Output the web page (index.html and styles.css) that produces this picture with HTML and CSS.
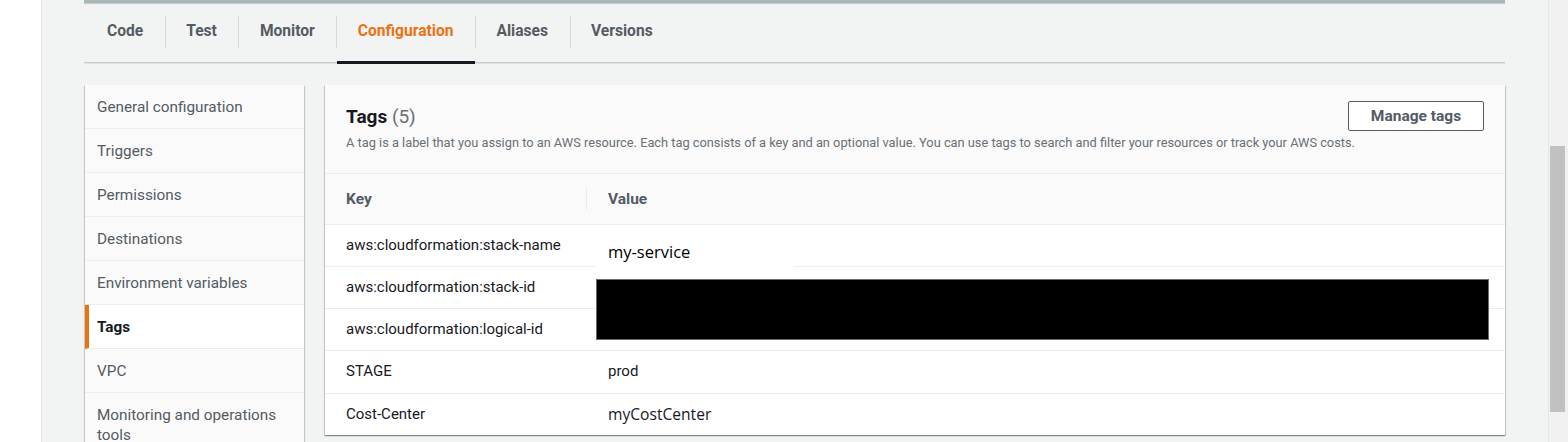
FILE: index.html
```html
<!DOCTYPE html>
<html>
<head>
<meta charset="utf-8">
<link rel="stylesheet" href="styles.css">
</head>
<body>
<div class="page">
  <div class="gutter"></div>
  <div class="main">
    <div class="topcard"></div>
    <div class="tabs">
      <div class="tab first">Code</div>
      <div class="tab">Test</div>
      <div class="tab">Monitor</div>
      <div class="tab active">Configuration</div>
      <div class="tab">Aliases</div>
      <div class="tab">Versions</div>
    </div>
    <div class="content">
      <nav class="sidebar">
        <div class="item">General configuration</div>
        <div class="item">Triggers</div>
        <div class="item">Permissions</div>
        <div class="item">Destinations</div>
        <div class="item">Environment variables</div>
        <div class="item selected">Tags</div>
        <div class="item">VPC</div>
        <div class="item">Monitoring and operations tools</div>
      </nav>
      <section class="card">
        <div class="card-header">
          <div class="title-row">
            <h2 class="title">Tags <span class="count">(5)</span></h2>
            <button class="btn">Manage tags</button>
          </div>
          <p class="desc">A tag is a label that you assign to an AWS resource. Each tag consists of a key and an optional value. You can use tags to search and filter your resources or track your AWS costs.</p>
        </div>
        <div class="thead">
          <div class="th">Key</div>
          <div class="th sep">Value</div>
        </div>
        <div class="row">
          <div class="key">aws:cloudformation:stack-name</div>
          <div class="val"><span class="patch">my-service</span></div>
        </div>
        <div class="row">
          <div class="key">aws:cloudformation:stack-id</div>
          <div class="val"></div>
        </div>
        <div class="row">
          <div class="key">aws:cloudformation:logical-id</div>
          <div class="val"></div>
        </div>
        <div class="row tall">
          <div class="key">STAGE</div>
          <div class="val plain">prod</div>
        </div>
        <div class="row last">
          <div class="key">Cost-Center</div>
          <div class="val pasted">myCostCenter</div>
        </div>
        <div class="redact"></div>
      </section>
    </div>
  </div>
  <div class="scrollbar"><div class="thumb"></div></div>
</div>
</body>
</html>
```
FILE: styles.css
```css
* { box-sizing: border-box; }
html, body { margin: 0; padding: 0; }
body {
  width: 1568px;
  height: 442px;
  overflow: hidden;
  font-family: Roboto, "Liberation Sans", sans-serif;
  color: #16191f;
  background: #fff;
}
.page {
  display: flex;
  height: 442px;
}
.gutter {
  width: 42px;
  background: #fff;
  border-right: 1px solid #e4e6e6;
  flex: none;
}
.main {
  flex: 1;
  background: #f2f3f3;
  padding: 0 43px 0 42px;
  overflow: hidden;
}
.topcard {
  height: 3px;
  background: #aab7b8;
  box-shadow: 0 1px 1px rgba(0,28,36,.2);
}
.tabs {
  display: flex;
  height: 60px;
  border-bottom: 1px solid #c6cbcc;
  box-shadow: 0 1px 0 #e1e4e4;
}
.tab {
  position: relative;
  height: 59px;
  display: flex;
  align-items: center;
  padding: 0 21.5px 3px;
  font-size: 15.6px;
  font-weight: 700;
  color: #545b64;
}
.tab.first { padding-left: 23px; }
.tab + .tab::before {
  content: "";
  position: absolute;
  left: 0;
  top: 13px;
  height: 32px;
  width: 1px;
  background: #d5dbdb;
}
.tab.active {
  color: #ec7211;
}
.tab.active::after {
  content: "";
  position: absolute;
  left: 1px;
  right: 0;
  bottom: -2px;
  height: 3px;
  background: #16191f;
}
.content {
  display: flex;
  gap: 21px;
  margin-top: 22px;
  align-items: flex-start;
}
.sidebar {
  width: 219px;
  margin-left: 1px;
  background: #fafafa;
  box-shadow: 0 1px 1px 0 rgba(0,28,36,.3), 1px 1px 1px 0 rgba(0,28,36,.15), -1px 1px 1px 0 rgba(0,28,36,.15);
  flex: none;
}
.item {
  padding: 12px 12px 11px;
  line-height: 20px;
  font-size: 15.3px;
  color: #545b64;
  border-bottom: 1px solid #eaeded;
}
.item.selected {
  background: #fff;
  color: #16191f;
  font-weight: 700;
  border-left: 4px solid #ec7211;
  padding-left: 8px;
}
.card {
  position: relative;
  flex: 1;
  background: #fff;
  box-shadow: 0 1px 1px 0 rgba(0,28,36,.3), 1px 1px 1px 0 rgba(0,28,36,.15), -1px 1px 1px 0 rgba(0,28,36,.15);
}
.card-header {
  height: 89px;
  background: #fafafa;
  border-bottom: 1px solid #eaeded;
  padding: 16px 21px 0;
}
.title-row {
  display: flex;
  justify-content: space-between;
  align-items: flex-start;
}
.title {
  margin: 4px 0 0;
  font-size: 19px;
  line-height: 24px;
  font-weight: 700;
  color: #16191f;
}
.count {
  font-weight: 400;
  color: #687078;
}
.btn {
  width: 136px;
  height: 30px;
  background: #fff;
  border: 1px solid #545b64;
  border-radius: 2px;
  font-family: inherit;
  font-size: 15.5px;
  font-weight: 700;
  color: #545b64;
  padding: 0;
}
.desc {
  margin: 4px 0 0;
  font-size: 12.8px;
  line-height: 16px;
  color: #687078;
}
.thead {
  display: grid;
  grid-template-columns: 261px 1fr;
  height: 51px;
  background: #fafafa;
  border-bottom: 1px solid #eaeded;
}
.th {
  display: flex;
  align-items: center;
  padding-left: 21px;
  font-size: 15.5px;
  font-weight: 700;
  color: #545b64;
  position: relative;
}
.th.sep { padding-left: 22px; }
.th.sep::before {
  content: "";
  position: absolute;
  left: 0;
  top: 12px;
  height: 24px;
  width: 1px;
  background: #eaeded;
}
.row {
  display: grid;
  grid-template-columns: 261px 1fr;
  height: 42px;
  border-bottom: 1px solid #eaeded;
}
.row.tall { height: 43px; }
.row.last { border-bottom: none; height: 41px; }
.key {
  display: flex;
  align-items: center;
  padding-left: 21px;
  padding-bottom: 2px;
  font-size: 15px;
  color: #16191f;
}
.val {
  display: flex;
  align-items: center;
  padding-left: 22px;
  font-family: "Open Sans", "Noto Sans", sans-serif;
  font-size: 15.6px;
  color: #16191f;
}
.val.plain {
  font-family: Roboto, "Liberation Sans", sans-serif;
  font-size: 15px;
  padding-bottom: 2px;
}
.val.pasted { padding-bottom: 2px; }
.patch {
  align-self: stretch;
  display: flex;
  align-items: center;
  width: 198px;
  margin-left: -12px;
  margin-bottom: -1px;
  padding: 10px 0 0 12px;
  background: #fff;
  font-size: 16.5px;
  color: #000;
}
.redact {
  position: absolute;
  left: 271px;
  top: 194px;
  width: 893px;
  height: 61px;
  background: #000;
  border: 1px solid #6b6b6b;
}
.scrollbar {
  width: 20px;
  flex: none;
  background: #f1f1f1;
  border-left: 1px solid #e6e6e6;
  padding-top: 146px;
  padding-left: 1px;
}
.thumb {
  width: 15px;
  height: 266px;
  background: #c1c1c1;
}
```
